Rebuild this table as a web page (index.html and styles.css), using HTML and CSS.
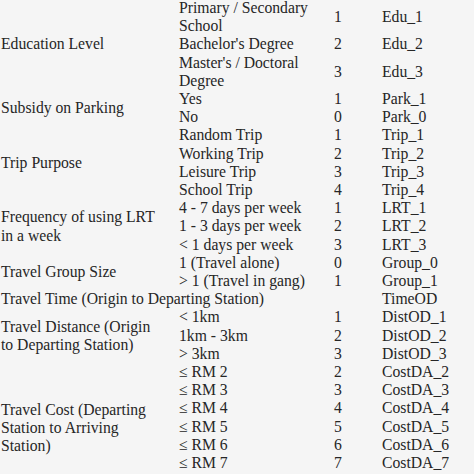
FILE: index.html
```html
<!DOCTYPE html>
<html>
<head>
<meta charset="utf-8">
<link rel="stylesheet" href="styles.css">
</head>
<body>
<table class="vars">
  <colgroup>
    <col class="c-var"><col class="c-cat"><col class="c-num"><col class="c-code">
  </colgroup>
  <tbody>
    <tr><td rowspan="3" class="var">Education Level</td><td class="cat">Primary / Secondary School</td><td class="num">1</td><td>Edu_1</td></tr>
    <tr><td class="cat">Bachelor's Degree</td><td class="num">2</td><td>Edu_2</td></tr>
    <tr><td class="cat">Master's / Doctoral Degree</td><td class="num">3</td><td>Edu_3</td></tr>
    <tr><td rowspan="2" class="var">Subsidy on Parking</td><td class="cat">Yes</td><td class="num">1</td><td>Park_1</td></tr>
    <tr><td class="cat">No</td><td class="num">0</td><td>Park_0</td></tr>
    <tr><td rowspan="4" class="var">Trip Purpose</td><td class="cat">Random Trip</td><td class="num">1</td><td>Trip_1</td></tr>
    <tr><td class="cat">Working Trip</td><td class="num">2</td><td>Trip_2</td></tr>
    <tr><td class="cat">Leisure Trip</td><td class="num">3</td><td>Trip_3</td></tr>
    <tr><td class="cat">School Trip</td><td class="num">4</td><td>Trip_4</td></tr>
    <tr><td rowspan="3" class="var">Frequency of using LRT in a week</td><td class="cat">4 - 7 days per week</td><td class="num">1</td><td>LRT_1</td></tr>
    <tr><td class="cat">1 - 3 days per week</td><td class="num">2</td><td>LRT_2</td></tr>
    <tr><td class="cat">&lt; 1 days per week</td><td class="num">3</td><td>LRT_3</td></tr>
    <tr><td rowspan="2" class="var">Travel Group Size</td><td class="cat">1 (Travel alone)</td><td class="num">0</td><td>Group_0</td></tr>
    <tr><td class="cat">&gt; 1 (Travel in gang)</td><td class="num">1</td><td>Group_1</td></tr>
    <tr><td colspan="2" class="span">Travel Time (Origin to Departing Station)</td><td class="num"></td><td>TimeOD</td></tr>
    <tr><td rowspan="3" class="var">Travel Distance (Origin to Departing Station)</td><td class="cat">&lt; 1km</td><td class="num">1</td><td>DistOD_1</td></tr>
    <tr><td class="cat">1km - 3km</td><td class="num">2</td><td>DistOD_2</td></tr>
    <tr><td class="cat">&gt; 3km</td><td class="num">3</td><td>DistOD_3</td></tr>
    <tr><td rowspan="6" class="var low">Travel Cost (Departing Station to Arriving Station)</td><td class="cat">≤ RM 2</td><td class="num">2</td><td>CostDA_2</td></tr>
    <tr><td class="cat">≤ RM 3</td><td class="num">3</td><td>CostDA_3</td></tr>
    <tr><td class="cat">≤ RM 4</td><td class="num">4</td><td>CostDA_4</td></tr>
    <tr><td class="cat">≤ RM 5</td><td class="num">5</td><td>CostDA_5</td></tr>
    <tr><td class="cat">≤ RM 6</td><td class="num">6</td><td>CostDA_6</td></tr>
    <tr><td class="cat">≤ RM 7</td><td class="num">7</td><td>CostDA_7</td></tr>
  </tbody>
</table>
</body>
</html>
```
FILE: styles.css
```css
html, body {
  margin: 0;
  padding: 0;
  background: #f5f5f5;
  overflow: hidden;
  height: 474px;
}
.vars {
  margin: -1px 0 0 0;
  border-collapse: collapse;
  table-layout: fixed;
  width: 474px;
  font-family: "Liberation Serif", "Times New Roman", serif;
  font-size: 15.7px;
  line-height: 18.2px;
  color: #262626;
}
.c-var { width: 179px; }
.c-cat { width: 142px; }
.c-num { width: 60px; }
.c-code { width: 93px; }
.vars td {
  padding: 0 8px 0 1px;
  vertical-align: middle;
  text-align: left;
}
.vars td.var { padding-right: 19px; }
.vars td.cat { padding-left: 0; }
.vars td.num { text-align: center; padding: 0 26px 0 0; }
.vars td.span { white-space: nowrap; padding-right: 0; }
.vars td.low { padding-top: 21px; }
```
